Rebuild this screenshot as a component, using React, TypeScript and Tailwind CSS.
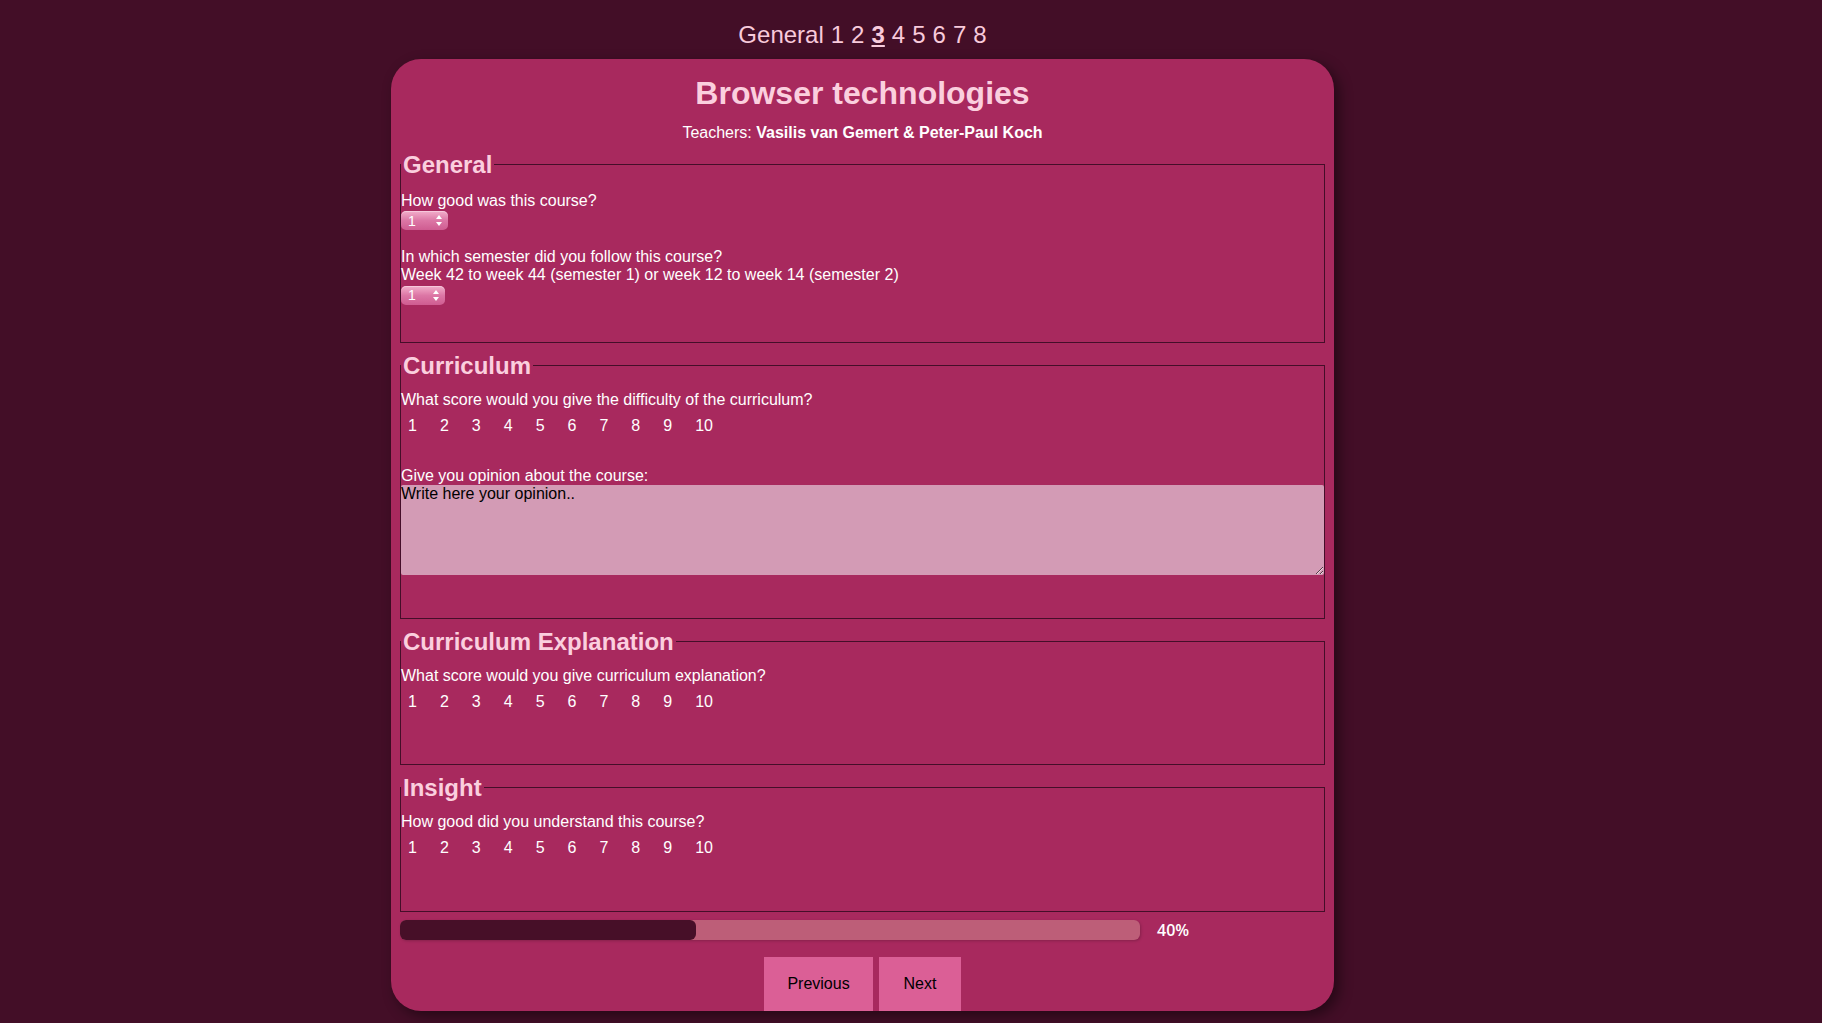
import React from "react";

const scores = [1, 2, 3, 4, 5, 6, 7, 8, 9, 10];
const pages = ["1", "2", "3", "4", "5", "6", "7", "8"];

const ScoreRow = ({ name }: { name: string }) => {
  return (
    <div className="mt-[8px] flex h-[18px] items-center gap-[23px] pl-[7px] leading-[18px]">
      {scores.map((s) => (
        <label key={s} className="cursor-pointer">
          <input type="radio" name={name} value={s} className="sr-only" />
          <span>{s}</span>
        </label>
      ))}
    </div>
  );
};

const NumberSelect = ({ width }: { width: string }) => {
  return (
    <div
      className={`relative flex h-[19px] ${width} items-center rounded-[5px] bg-gradient-to-b from-[#f2aecb] via-[#dc76a5] to-[#cf5c91] pl-[7px] text-[14px] leading-none text-white shadow-[inset_0_1px_0_rgba(255,255,255,0.35)]`}
    >
      <span>1</span>
      {/* up / down arrows */}
      <svg className="absolute right-[6px] top-[4px]" width="6" height="11" viewBox="0 0 6 11">
        <path d="M3 0 L6 4 L0 4 Z" fill="#fff" />
        <path d="M0 7 L6 7 L3 11 Z" fill="#fff" />
      </svg>
    </div>
  );
};

const Section = ({ title, children, bottom }: { title: string; children: React.ReactNode; bottom: string }) => {
  return (
    <fieldset className={`mt-[9px] border border-[#450e29] ${bottom}`}>
      <legend className="px-[2px] text-[24px] font-bold leading-[27px] text-[#fbcfde]">{title}</legend>
      {children}
    </fieldset>
  );
};

export default function App() {
  const progress = 40;

  return (
    <div className="min-h-screen bg-[#430e27] font-['Liberation_Sans',Arial,sans-serif] text-[16px] text-white">
      <div className="flex w-[1725px] flex-col items-center">
        {/* Page nav */}
        <nav className="mb-[10px] mt-[21px] flex gap-[7px] text-[24px] leading-[28px] text-[#f8cadb]">
          <span>General</span>
          {pages.map((p) => (
            <span key={p} className={p === "3" ? "font-bold underline underline-offset-2" : ""}>
              {p}
            </span>
          ))}
        </nav>

        {/* Card */}
        <form className="w-[943px] rounded-[30px] bg-[#a8295e] px-[9px] pt-[16px] shadow-[5px_5px_14px_rgba(0,0,0,0.45)]">
          <h1 className="text-center text-[32px] font-bold leading-[37px] text-[#fbcfde]">Browser technologies</h1>
          <p className="mt-[12px] text-center leading-[18px]">
            Teachers: <strong>Vasilis van Gemert &amp; Peter-Paul Koch</strong>
          </p>

          <div className="mt-[4px]">
            <Section title="General" bottom="pb-[37px]">
              <label className="mt-[14px] block leading-[18px]">How good was this course?</label>
              <div className="mt-px">
                <NumberSelect width="w-[47px]" />
              </div>
              <label className="mt-[18px] block leading-[18.4px]">
                In which semester did you follow this course?
                <br />
                Week 42 to week 44 (semester 1) or week 12 to week 14 (semester 2)
              </label>
              <div className="mt-px">
                <NumberSelect width="w-[44px]" />
              </div>
            </Section>

            <Section title="Curriculum" bottom="pb-[43px]">
              <p className="mt-[12px] leading-[18px]">What score would you give the difficulty of the curriculum?</p>
              <ScoreRow name="difficulty" />
              <label className="mt-[32px] block leading-[18px]" htmlFor="opinion">
                Give you opinion about the course:
              </label>
              <textarea
                id="opinion"
                defaultValue="Write here your opinion.."
                className="block h-[90px] w-full rounded-[2px] bg-[#d39bb5] p-0 leading-[18px] text-black outline-none"
              />
            </Section>

            <Section title="Curriculum Explanation" bottom="pb-[53px]">
              <p className="mt-[12px] leading-[18px]">What score would you give curriculum explanation?</p>
              <ScoreRow name="explanation" />
            </Section>

            <Section title="Insight" bottom="pb-[54px]">
              <p className="mt-[12px] leading-[18px]">How good did you understand this course?</p>
              <ScoreRow name="insight" />
            </Section>
          </div>

          {/* Progress */}
          <div className="mt-[6px] flex items-center gap-[17px]">
            <div className="h-[20px] w-[80%] rounded-[6px] bg-[#bd5e78] shadow-[1px_1px_3px_rgba(0,0,0,0.2)]">
              <div className="h-full rounded-[6px] bg-[#470f28]" style={{ width: `${progress}%` }} />
            </div>
            <span className="font-['Open_Sans',sans-serif] text-[16px] font-semibold">{progress}%</span>
          </div>

          {/* Buttons */}
          <div className="mt-[15px] flex justify-center gap-[6px]">
            <button type="button" className="h-[54px] w-[109px] bg-[#db5f96] text-black">
              Previous
            </button>
            <button type="button" className="h-[54px] w-[82px] bg-[#db5f96] text-black">
              Next
            </button>
          </div>
        </form>
      </div>
    </div>
  );
}
